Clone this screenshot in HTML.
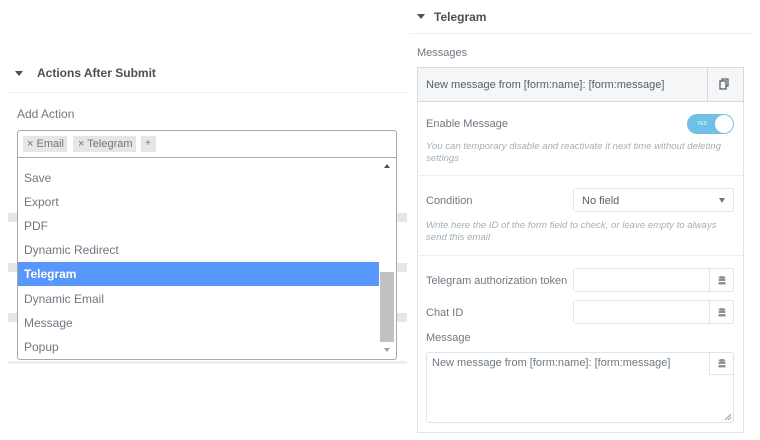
<!DOCTYPE html>
<html><head><meta charset="utf-8"><style>
*{box-sizing:border-box;margin:0;padding:0}
body{width:760px;height:440px;background:#fff;font-family:"Liberation Sans",sans-serif;font-size:11.5px;color:#6d7882;position:relative;overflow:hidden}
.a{position:absolute}
.t{line-height:14px}
.gb{background:#e6e6e6}
.tri{width:0;height:0;border-left:4px solid transparent;border-right:4px solid transparent;border-top:5px solid #495157}
.help{font-style:italic;color:#a4afb7;font-size:9.6px;line-height:12px}
.inp{border:1px solid #e1e4e7;border-radius:3px;background:#fff}
.ic{border-left:1px solid #e1e4e7;width:24px;height:100%;position:absolute;right:0;top:0;display:flex;align-items:center;justify-content:center}
</style></head><body>
<div class="a tri" style="left:15px;top:71px"></div>
<div class="a t" style="left:37px;top:66px;font-weight:bold;color:#495157;font-size:12px">Actions After Submit</div>
<div class="a" style="left:8px;top:92px;width:399px;height:1px;background:#eceeef"></div>
<div class="a t" style="left:17px;top:107px;font-size:12px">Add Action</div>
<div class="a gb" style="left:8px;top:213px;width:10px;height:9px"></div>
<div class="a gb" style="left:8px;top:263px;width:10px;height:9px"></div>
<div class="a gb" style="left:8px;top:313px;width:10px;height:9px"></div>
<div class="a gb" style="left:396px;top:213px;width:11px;height:9px"></div>
<div class="a gb" style="left:396px;top:263px;width:11px;height:9px"></div>
<div class="a gb" style="left:396px;top:313px;width:11px;height:9px"></div>
<div class="a" style="left:8px;top:361px;width:399px;height:3px;background:#eceeef"></div>
<div class="a" style="left:17px;top:130px;width:380px;height:230px;border:1px solid #a8a8a8;border-radius:3px;background:#fff"></div>
<div class="a" style="left:18px;top:157px;width:378px;height:1px;background:#aaa"></div>
<div class="a t" style="left:23px;top:136px;width:44px;height:16px;background:#e6e6e6;font-size:11px;padding:1px 0 0 4px">× Email</div>
<div class="a t" style="left:73px;top:136px;width:63px;height:16px;background:#e6e6e6;font-size:11px;padding:1px 0 0 5px">× Telegram</div>
<div class="a t" style="left:141px;top:136px;width:15px;height:16px;background:#e6e6e6;font-size:10px;padding:1px 0 0 4px">+</div>
<div class="a t" style="left:24px;top:171px;font-size:12px">Save</div>
<div class="a t" style="left:24px;top:195px;font-size:12px">Export</div>
<div class="a t" style="left:24px;top:219px;font-size:12px">PDF</div>
<div class="a t" style="left:24px;top:243px;font-size:12px">Dynamic Redirect</div>
<div class="a t" style="left:18px;top:262px;width:361px;height:24px;background:#5897fb;color:#fff;font-weight:bold;font-size:12px;padding:5px 0 0 6px">Telegram</div>
<div class="a t" style="left:24px;top:292px;font-size:12px">Dynamic Email</div>
<div class="a t" style="left:24px;top:316px;font-size:12px">Message</div>
<div class="a t" style="left:24px;top:340px;font-size:12px">Popup</div>
<div class="a" style="left:380px;top:272px;width:14px;height:70px;background:#c1c1c1"></div>
<div class="a" style="left:384px;top:164px;width:0;height:0;border-left:3px solid transparent;border-right:3px solid transparent;border-bottom:4px solid #505050"></div>
<div class="a" style="left:384px;top:348px;width:0;height:0;border-left:3px solid transparent;border-right:3px solid transparent;border-top:4px solid #a3a3a3"></div>
<div class="a tri" style="left:417px;top:14px"></div>
<div class="a t" style="left:434px;top:10px;font-weight:bold;color:#495157;font-size:12px">Telegram</div>
<div class="a" style="left:410px;top:33px;width:342px;height:1px;background:#eceeef"></div>
<div class="a t" style="left:417px;top:46px;font-size:11px">Messages</div>
<div class="a" style="left:417px;top:67px;width:327px;height:366px;border:1px solid #e1e4e7"></div>
<div class="a" style="left:417px;top:67px;width:327px;height:35px;border:1px solid #d5d8dc;background:#f5f6f7"></div>
<div class="a" style="left:707px;top:68px;width:1px;height:33px;background:#d5d8dc"></div>
<div class="a t" style="left:426px;top:78px;color:#556068;font-size:11px">New message from [form:name]: [form:message]</div>
<svg class="a" style="left:719px;top:78px" width="11" height="12" viewBox="0 0 11 12"><rect x="1" y="3" width="6" height="8" fill="none" stroke="#556068" stroke-width="1.3"/><path d="M3 3V1h6v7H7" fill="none" stroke="#556068" stroke-width="1.3"/></svg>
<div class="a t" style="left:426px;top:117px;font-size:11px">Enable Message</div>
<div class="a" style="left:687px;top:114px;width:47px;height:20px;border-radius:10px;background:#6ec1e4"></div>
<div class="a" style="left:697px;top:121px;font-size:5px;color:#fff">YES</div>
<div class="a" style="left:715px;top:115px;width:18px;height:18px;border-radius:50%;background:#fff"></div>
<div class="a help" style="left:426px;top:141px;width:310px">You can temporary disable and reactivate it next time without deleting settings</div>
<div class="a" style="left:418px;top:175px;width:325px;height:1px;background:#eceeef"></div>
<div class="a t" style="left:426px;top:194px;font-size:11px">Condition</div>
<div class="a inp" style="left:573px;top:188px;width:161px;height:24px"></div>
<div class="a t" style="left:582px;top:194px;color:#556068;font-size:11px">No field</div>
<div class="a" style="left:719px;top:198px;border-left:3.5px solid transparent;border-right:3.5px solid transparent;border-top:5px solid #6d7882"></div>
<div class="a help" style="left:426px;top:220px;width:310px">Write here the ID of the form field to check, or leave empty to always send this email</div>
<div class="a" style="left:418px;top:255px;width:325px;height:1px;background:#eceeef"></div>
<div class="a t" style="left:426px;top:274px;font-size:11px">Telegram authorization token</div>
<div class="a inp" style="left:573px;top:268px;width:161px;height:24px"><div class="ic"><svg width="8" height="9" viewBox="0 0 8 9"><ellipse cx="4" cy="1.5" rx="3.5" ry="1.5" fill="#8a949b"/><rect x="0.5" y="3" width="7" height="2" fill="#8a949b"/><rect x="0.5" y="6" width="7" height="2.5" fill="#8a949b"/></svg></div></div>
<div class="a t" style="left:426px;top:306px;font-size:11px">Chat ID</div>
<div class="a inp" style="left:573px;top:300px;width:161px;height:24px"><div class="ic"><svg width="8" height="9" viewBox="0 0 8 9"><ellipse cx="4" cy="1.5" rx="3.5" ry="1.5" fill="#8a949b"/><rect x="0.5" y="3" width="7" height="2" fill="#8a949b"/><rect x="0.5" y="6" width="7" height="2.5" fill="#8a949b"/></svg></div></div>
<div class="a t" style="left:426px;top:331px;font-size:11px">Message</div>
<div class="a inp" style="left:426px;top:352px;width:308px;height:71px"></div>
<div class="a" style="left:709px;top:352px;width:25px;height:23px;border-left:1px solid #e1e4e7;border-bottom:1px solid #e1e4e7;display:flex;align-items:center;justify-content:center"><svg width="8" height="9" viewBox="0 0 8 9"><ellipse cx="4" cy="1.5" rx="3.5" ry="1.5" fill="#8a949b"/><rect x="0.5" y="3" width="7" height="2" fill="#8a949b"/><rect x="0.5" y="6" width="7" height="2.5" fill="#8a949b"/></svg></div>
<div class="a t" style="left:432px;top:356px;font-size:11px;color:#6d7882">New message from [form:name]: [form:message]</div>
<svg class="a" style="left:724px;top:413px" width="8" height="8"><path d="M1 7L7 1M4 7L7 4" stroke="#999" stroke-width="1"/></svg>
</body></html>
